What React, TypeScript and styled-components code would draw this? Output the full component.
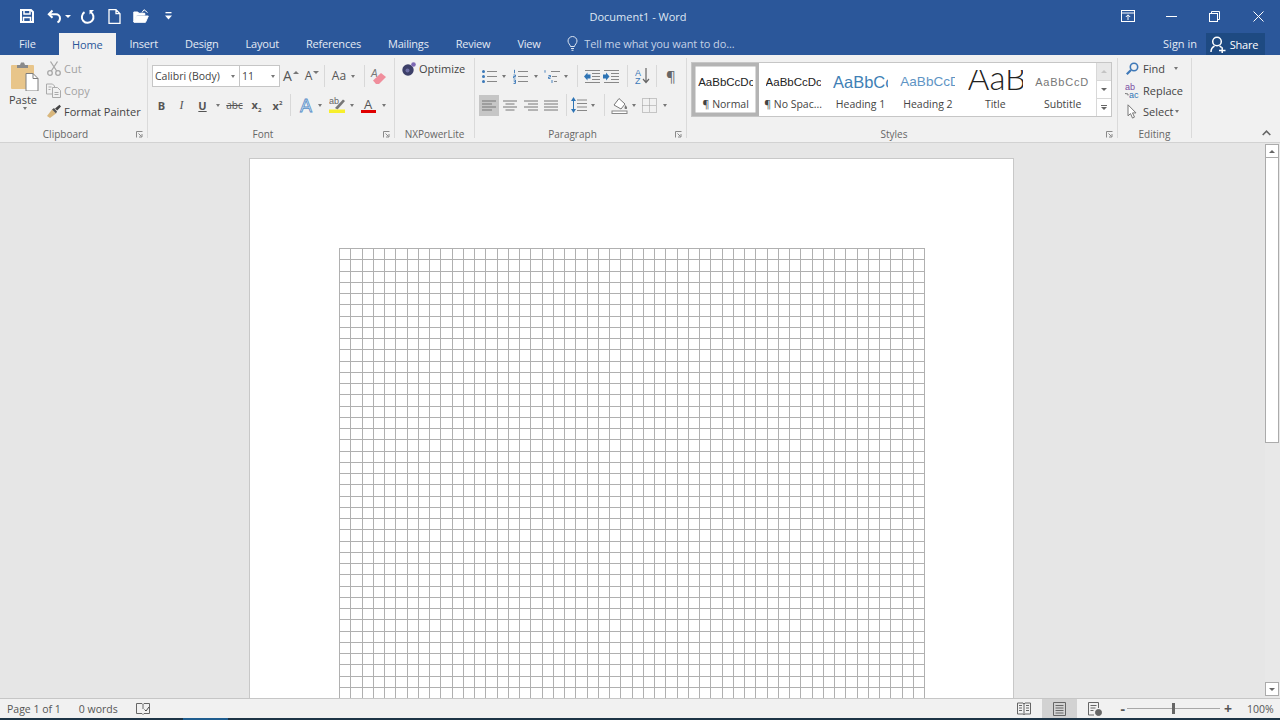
import React from 'react';
import styled, { createGlobalStyle } from 'styled-components';

const GlobalStyle = createGlobalStyle`
  html, body { margin: 0; padding: 0; background: #e6e6e6; }
  body { font-family: "Open Sans", "Noto Sans", sans-serif; overflow: hidden; }
  * { box-sizing: border-box; }
`;

/* ---------- icons ---------- */

const Svg = styled.svg`
  display: block;
  flex: none;
`;

const SaveIcon = () => (
  <Svg width="16" height="16" viewBox="0 0 16 16" fill="none" stroke="#fff" strokeWidth="2">
    <path d="M2 2h10l2 2v10H2z" />
    <path d="M5 2v4h6V2M4.5 14V9.5h7V14" strokeWidth="1.5" />
  </Svg>
);
const UndoIcon = () => (
  <Svg width="15" height="15" viewBox="0 0 15 15" fill="none" stroke="#fff" strokeWidth="2">
    <path d="M5.5 1.5 1.8 5.2l3.7 3.6" />
    <path d="M2 5.2h7a4 4 0 0 1 4 4c0 2-1 3.400-2.500 4.300" />
  </Svg>
);
const RepeatIcon = () => (
  <Svg width="15" height="15" viewBox="0 0 15 15" fill="none" stroke="#fff" strokeWidth="2">
    <path d="M4.500 3.200a5.800 5.800 0 1 0 6-.2" />
    <path d="M14 1H9.500v4.500z" fill="#fff" stroke="none" />
  </Svg>
);
const NewDocIcon = () => (
  <Svg width="13" height="15" viewBox="0 0 13 15" fill="none" stroke="#fff" strokeWidth="1.300">
    <path d="M1 .7h7l4 4v9.600H1zM8 .7v4h4" />
  </Svg>
);
const OpenIcon = () => (
  <Svg width="16" height="14" viewBox="0 0 16 14" fill="#fff" stroke="#fff" strokeWidth="1">
    <path d="M.8 13V3h4l1 1.300h6V6H4L.8 13z" />
    <path d="M1 13.300 4.200 7H15.300L12.500 13.300z" />
    <path d="M9 3.500 11 .7l3.500 2.800" fill="none" />
  </Svg>
);
const CustomizeIcon = () => (
  <Svg width="7" height="8" viewBox="0 0 7 8" fill="#fff">
    <rect x="0.500" y="0" width="6" height="1.300" />
    <path d="M0 3.500h7L3.500 7.500z" />
  </Svg>
);
const DisplayIcon = () => (
  <Svg width="14" height="12" viewBox="0 0 14 12" fill="none" stroke="#fff" strokeWidth="1">
    <rect x=".5" y=".5" width="13" height="11" />
    <path d="M.5 3h13M7 10V5M4.800 7 7 4.800 9.200 7" />
  </Svg>
);
const MinimizeIcon = () => (
  <Svg width="11" height="3" viewBox="0 0 11 3" stroke="#fff" strokeWidth="1">
    <path d="M0 1.500h11" />
  </Svg>
);
const RestoreIcon = () => (
  <Svg width="11" height="11" viewBox="0 0 11 11" fill="none" stroke="#fff" strokeWidth="1">
    <rect x=".5" y="2.500" width="8" height="8" />
    <path d="M2.500 2.500v-2h8v8h-2" />
  </Svg>
);
const CloseIcon = () => (
  <Svg width="11" height="11" viewBox="0 0 11 11" stroke="#fff" strokeWidth="1">
    <path d="M.5.5l10 10M10.500.5l-10 10" />
  </Svg>
);
const BulbIcon = () => (
  <Svg width="11" height="15" viewBox="0 0 11 15" fill="none" stroke="#dbe4f1" strokeWidth="1">
    <path d="M3.500 10.500C3.300 8.500 1 7.500 1 5a4.500 4.500 0 0 1 9 0c0 2.500-2.300 3.500-2.500 5.500zM4 12.500h3M4.500 14.300h2" />
  </Svg>
);
const PersonIcon = () => (
  <Svg width="16" height="17" viewBox="0 0 16 17" fill="none" stroke="#fff" strokeWidth="1.500">
    <circle cx="7" cy="5.500" r="4.300" />
    <path d="M1 16c0-3 1.500-5 3.500-6M9.500 10c.8.300 1.500.9 2 1.500M9 14.500h6.500M12.200 11.200v6" />
  </Svg>
);
const PasteIcon = () => (
  <Svg width="29" height="29" viewBox="0 0 29 29">
    <rect x="1" y="3" width="23" height="24" rx="1" fill="#e8c58a" />
    <path d="M7 3h3l1-2.500h3L15 3h3v3H7z" fill="#8a8a8a" />
    <path d="M16 11.500h7l5 5V29H16z" fill="#fff" stroke="#7e7e7e" />
    <path d="M23 11.500v5h5" fill="none" stroke="#7e7e7e" />
  </Svg>
);
const ScissorsIcon = () => (
  <Svg width="14" height="15" viewBox="0 0 14 15" fill="none" stroke="#a8a8a8" strokeWidth="1.300">
    <circle cx="3" cy="12" r="2.300" />
    <circle cx="11" cy="12" r="2.300" />
    <path d="M4.300 10 10.500.5M9.700 10 3.500.5" />
  </Svg>
);
const CopyIcon = () => (
  <Svg width="15" height="15" viewBox="0 0 15 15" fill="#f1f1f1" stroke="#ababab" strokeWidth="1">
    <path d="M.5 1h6l2 2v8H.5z" />
    <path d="M6.500 4.500h5l3 3v7h-8z" />
    <path d="M2.500 4h3M2.500 6.500h2M8.500 9.500h4M8.500 11.500h4" />
  </Svg>
);
const PainterIcon = () => (
  <Svg width="16" height="15" viewBox="0 0 16 15">
    <path d="M1 12 6 5.500 10 9.500 4 14z" fill="#d9b77c" />
    <path d="M6 5.500 8 4l3 3.500-1 2z" fill="#555" />
    <path d="M9 4.500 13.500.8l1.500 1.700-3.800 4z" fill="#444" />
  </Svg>
);
const EraserIcon = () => (
  <Svg width="18" height="17" viewBox="0 0 18 17">
    <text x="1" y="9" fontFamily="Liberation Sans, sans-serif" fontStyle="italic" fontSize="10" fill="#777">A</text>
    <path d="M3 12.500 11 5l5 4-7 7H6z" fill="#f08e9c" />
  </Svg>
);
const TextEffectIcon = () => (
  <Svg width="20" height="20" viewBox="0 0 20 20">
    <text x="10" y="16.500" textAnchor="middle" fontFamily="Liberation Sans, sans-serif" fontSize="18" fill="#e3eef9" stroke="#5a8fc8" strokeWidth=".8">A</text>
  </Svg>
);
const HighlightIcon = () => (
  <Svg width="17" height="16" viewBox="0 0 17 16">
    <text x="0" y="7" fontFamily="Liberation Sans, sans-serif" fontSize="9" fill="#666">ab</text>
    <path d="M6 11 14 2.500l2 1.500-7.500 8.500z" fill="#777" />
    <rect x="0" y="12.500" width="16" height="3.500" fill="#f7ef2c" />
  </Svg>
);
const OptimizeIcon = () => (
  <Svg width="14" height="14" viewBox="0 0 14 14">
    <circle cx="6" cy="8" r="5.700" fill="#3c3f68" />
    <circle cx="5.500" cy="8.500" r="2" fill="#6e6fa5" />
    <circle cx="11.500" cy="2.500" r="2.300" fill="#7d68b4" />
  </Svg>
);
const BulletsIcon = () => (
  <Svg width="15" height="15" viewBox="0 0 15 15" stroke="#888">
    <path d="M5 2.500h10M5 7.500h10M5 12.500h10" />
    <circle cx="1.500" cy="2.500" r="1.500" fill="#3b78b8" stroke="none" />
    <circle cx="1.500" cy="7.500" r="1.500" fill="#3b78b8" stroke="none" />
    <circle cx="1.500" cy="12.500" r="1.500" fill="#3b78b8" stroke="none" />
  </Svg>
);
const NumberingIcon = () => (
  <Svg width="15" height="15" viewBox="0 0 15 15" stroke="#888">
    <path d="M5 2.500h10M5 7.500h10M5 12.500h10" />
    <path d="M1.500.8v3.500M.5 6h2v1.500H.5V9h2M.5 11h2v3.500h-2M.8 12.700h1.500" stroke="#3b78b8" strokeWidth=".9" fill="none" />
  </Svg>
);
const MultilevelIcon = () => (
  <Svg width="16" height="15" viewBox="0 0 16 15" stroke="#888">
    <path d="M7 2.500h9M8 7.500h5M10 12.500h3" />
    <path d="M1 1.200v2.500M4.500 6.500h2v1.500h-2V9.500h2M8 11v3" stroke="#3b78b8" strokeWidth=".9" fill="none" />
  </Svg>
);
const IndentIcon = ({ $flip }: { $flip?: boolean }) => (
  <Svg width="16" height="13" viewBox="0 0 16 13" stroke="#888">
    <path d="M1 .5h15M8 3.500h8M8 6.500h8M8 9.500h8M1 12.500h15" />
    {$flip ? (
      <path d="M0 4.500h3v-2l3.500 4-3.500 4v-2H0z" fill="#2e74b5" stroke="none" />
    ) : (
      <path d="M6.500 4.500h-3v-2L0 6.500l3.500 4v-2h3z" fill="#2e74b5" stroke="none" />
    )}
  </Svg>
);
const SortIcon = () => (
  <Svg width="15" height="16" viewBox="0 0 15 16">
    <text x="0" y="7.500" fontFamily="Liberation Sans, sans-serif" fontSize="9" fill="#3b78b8">A</text>
    <text x="0" y="15.500" fontFamily="Liberation Sans, sans-serif" fontSize="9" fill="#3b78b8">Z</text>
    <path d="M11 0v14M8 11l3 3.500 3-3.500" fill="none" stroke="#666" strokeWidth="1.200" />
  </Svg>
);
const AlignIcon = ({ $mode }: { $mode: 'left' | 'center' | 'right' | 'justify' }) => {
  const short = {
    left: 'M1 5h10M1 11h10',
    center: 'M3.500 5h9M3.500 11h9',
    right: 'M5 5h10M5 11h10',
    justify: 'M1 5h14M1 11h14'
  }[$mode];
  return (
    <Svg width="16" height="13" viewBox="0 0 16 13" stroke="#777" fill="none">
      <path d="M1 2h14M1 8h14" />
      <path d={short} />
    </Svg>
  );
};
const LineSpacingIcon = () => (
  <Svg width="16" height="16" viewBox="0 0 16 16" fill="none">
    <path d="M6 3h10M6 6.500h10M6 10h10M6 13.500h10" stroke="#888" />
    <path d="M2.500 2v12" stroke="#2e74b5" />
    <path d="M0 4l2.500-4L5 4zM0 12l2.500 4L5 12z" fill="#2e74b5" />
  </Svg>
);
const ShadingIcon = () => (
  <Svg width="18" height="17" viewBox="0 0 18 17" fill="none">
    <path d="M3 8 8 1.500 14 7l-4 5z" fill="#fff" stroke="#777" />
    <path d="M14.500 8c1 1.500 2 2.500 1.500 3.500s-2.500.5-2.500-.5.500-2 1-3z" fill="#777" />
    <rect x="1" y="14" width="15" height="2.500" fill="#fff" stroke="#888" />
  </Svg>
);
const BordersIcon = () => (
  <Svg width="15" height="15" viewBox="0 0 15 15" fill="none" stroke="#999" strokeDasharray="1 1">
    <path d="M.5.500h14v14H.5zM.5 7.500h14M7.500.500v14" />
  </Svg>
);
const LauncherIcon = () => (
  <Svg width="7" height="7" viewBox="0 0 7 7" fill="none" stroke="#8a8a8a">
    <path d="M.5 6.500v-6h6M2.500 2.500l3 3M6 3v3H3" />
  </Svg>
);
const FindIcon = () => (
  <Svg width="13" height="13" viewBox="0 0 13 13" fill="none" stroke="#3f79b8" strokeWidth="1.600">
    <circle cx="8" cy="5" r="3.700" />
    <path d="M5 8 .8 12.200" strokeWidth="2.200" />
  </Svg>
);
const ReplaceIcon = () => (
  <Svg width="16" height="15" viewBox="0 0 16 15">
    <text x="0" y="6.500" fontFamily="Liberation Sans, sans-serif" fontSize="9" fill="#7a4ea3">ab</text>
    <text x="4" y="14.500" fontFamily="Liberation Sans, sans-serif" fontSize="9" fill="#2e74b5">ac</text>
    <path d="M0 10.500 3 11v1.500" fill="none" stroke="#777" />
  </Svg>
);
const CursorIcon = () => (
  <Svg width="11" height="15" viewBox="0 0 11 15" fill="#fff" stroke="#777">
    <path d="M1 .8v11l2.500-2.200 2 4.500 2-1-2-4.200H9z" />
  </Svg>
);
const ChevronUpIcon = () => (
  <Svg width="9" height="6" viewBox="0 0 9 6" fill="none" stroke="#666" strokeWidth="1.600">
    <path d="M.7 5 4.500 1.200 8.300 5" />
  </Svg>
);
const ProofIcon = () => (
  <Svg width="14" height="14" viewBox="0 0 14 14" fill="none" stroke="#666">
    <path d="M.5 1.500H6l1 1 1-1h5.500v10H8l-1 1-1-1H.5zM7 2.500V7" />
    <path d="M8.500 7.500 10 9l3-4" stroke="#444" />
  </Svg>
);
const ReadIcon = () => (
  <Svg width="14" height="13" viewBox="0 0 14 13" fill="none" stroke="#666">
    <path d="M.5 1h5.500L7 2l1-1h5.500v11H8l-1 .7L6 12H.5zM7 2v10M2 3.500h3M2 6h3M2 8.500h3M9 3.500h3M9 6h3M9 8.500h3" />
  </Svg>
);
const PrintIcon = () => (
  <Svg width="13" height="14" viewBox="0 0 13 14" fill="none" stroke="#666">
    <path d="M.5.500h12v13H.5zM2.500 3.500h8M2.500 6h8M2.500 8.500h8M2.500 11h8" />
  </Svg>
);
const WebIcon = () => (
  <Svg width="14" height="14" viewBox="0 0 14 14" fill="none" stroke="#666">
    <path d="M6 13H.5V.5h10V6M2.500 3.500h6M2.500 6h5M2.500 8.500h3" />
    <circle cx="10.500" cy="10.500" r="3" fill="#666" />
  </Svg>
);

/* ---------- title bar ---------- */

const Screen = styled.div`
  width: 1280px;
  height: 720px;
  display: flex;
  flex-direction: column;
  overflow: hidden;
  color: #444;
  font-size: 11px;
`;

const TitleBar = styled.header`
  height: 32px;
  flex: none;
  display: flex;
  align-items: center;
  background: #2b579a;
`;

const QuickAccess = styled.div`
  display: flex;
  align-items: center;
  padding-left: 14px;
`;

const QuickButton = styled.div<{ $w: number }>`
  width: ${(p) => p.$w}px;
  height: 28px;
  display: flex;
  align-items: center;
  justify-content: center;
`;

const QuickCaret = styled.span`
  width: 0;
  height: 0;
  margin-left: -3px;
  border-left: 3px solid transparent;
  border-right: 3px solid transparent;
  border-top: 3px solid #fff;
`;

const WindowTitle = styled.div`
  flex: 1;
  padding-right: 9px;
  text-align: center;
  font-size: 11px;
  color: #dfe7f3;
`;

const WindowButton = styled.div`
  width: 43.500px;
  height: 28px;
  display: flex;
  align-items: center;
  justify-content: center;
`;

const WindowControls = styled.div`
  display: flex;
`;

/* ---------- tabs ---------- */

const TabRow = styled.nav`
  height: 23px;
  flex: none;
  display: flex;
  align-items: stretch;
  padding-left: 5.500px;
  background: #2b579a;
  font-size: 11px;
  letter-spacing: -0.2px;
  color: #e4eaf4;
`;

const Tab = styled.div<{ $active?: boolean; $file?: boolean }>`
  display: flex;
  align-items: center;
  padding: 0 13.500px;
  margin-top: ${(p) => (p.$active ? 1 : 0)}px;
  margin-right: ${(p) => (p.$file ? 9.500 : 0)}px;
  background: ${(p) => (p.$active ? '#f1f1f1' : 'transparent')};
  color: ${(p) => (p.$active ? '#2b579a' : 'inherit')};
`;

const TellMe = styled.div`
  display: flex;
  align-items: center;
  gap: 6px;
  margin-left: 13px;
  letter-spacing: -0.1px;
  color: #c4d2e6;
`;

const Spacer = styled.div`
  flex: 1;
`;

const SignIn = styled.div`
  display: flex;
  align-items: center;
  margin-right: 9px;
  letter-spacing: 0;
`;

const ShareButton = styled.div`
  width: 59px;
  margin: 1px 15px 0 0;
  padding-right: 3px;
  display: flex;
  align-items: center;
  justify-content: center;
  gap: 4px;
  background: #1e4a82;
  color: #fff;
`;

/* ---------- ribbon ---------- */

const Ribbon = styled.section`
  height: 88px;
  flex: none;
  display: flex;
  padding-top: 3px;
  background: #f1f1f1;
  border-bottom: 1px solid #d2d2d2;
`;

const Group = styled.div<{ $w: number }>`
  width: ${(p) => p.$w}px;
  height: 80px;
  flex: none;
  display: flex;
  flex-direction: column;
  border-right: 1px solid #dadada;
`;

const GroupBody = styled.div<{ $pad?: number }>`
  flex: 1;
  min-height: 0;
  display: flex;
  padding-left: ${(p) => p.$pad ?? 0}px;
`;

const GroupLabel = styled.div<{ $launcher?: boolean }>`
  position: relative;
  height: 12px;
  line-height: 12px;
  margin-bottom: -2px;
  padding-right: ${(p) => (p.$launcher ? 16 : 0)}px;
  text-align: center;
  font-size: 10px;
  color: #666;
`;

const Launcher = styled.span`
  position: absolute;
  right: 4px;
  top: 3px;
`;

const PasteButton = styled.div`
  width: 46px;
  display: flex;
  flex-direction: column;
  align-items: center;
  padding-top: 4px;
  padding-left: 3px;
  font-size: 11px;
  color: #444;
`;

const PasteLabel = styled.span`
  margin: 1px 3px 0 0;
  line-height: 15px;
`;

const ActionList = styled.div`
  display: flex;
  flex-direction: column;
`;

const Action = styled.div<{ $disabled?: boolean }>`
  height: 21.500px;
  display: flex;
  align-items: center;
  font-size: 11px;
  white-space: nowrap;
  color: ${(p) => (p.$disabled ? '#a3a3a3' : '#444')};
`;

const ActionIcon = styled.span<{ $w?: number }>`
  width: ${(p) => p.$w ?? 18}px;
  display: flex;
  justify-content: center;
  padding-right: 3px;
`;

const ToolColumn = styled.div`
  display: flex;
  flex-direction: column;
  gap: 7px;
  padding-top: 7px;
`;

const ToolRow = styled.div`
  height: 22px;
  display: flex;
  align-items: center;
`;

const Combo = styled.div<{ $w: number }>`
  width: ${(p) => p.$w}px;
  height: 22px;
  margin-right: -1px;
  padding-left: 2px;
  display: flex;
  align-items: center;
  justify-content: space-between;
  background: #fff;
  border: 1px solid #c6c6c6;
  font-size: 10.500px;
  white-space: nowrap;
`;

const Tool = styled.div<{ $w: number; $on?: boolean }>`
  width: ${(p) => p.$w}px;
  height: 21px;
  flex: none;
  display: flex;
  align-items: center;
  justify-content: center;
  background: ${(p) => (p.$on ? '#c6c6c6' : 'transparent')};
`;

const Glyph = styled.span<{
  $size?: number;
  $bold?: boolean;
  $italic?: boolean;
  $under?: boolean;
  $strike?: boolean;
  $serif?: boolean;
  $color?: string;
}>`
  font-family: ${(p) => (p.$serif ? '"Liberation Serif", serif' : '"Open Sans", sans-serif')};
  font-size: ${(p) => p.$size ?? 11}px;
  font-weight: ${(p) => (p.$bold ? 700 : 400)};
  font-style: ${(p) => (p.$italic ? 'italic' : 'normal')};
  text-decoration: ${(p) => (p.$under ? 'underline' : p.$strike ? 'line-through' : 'none')};
  color: ${(p) => p.$color ?? '#555'};
  line-height: 1;
`;

const SmallSup = styled.sup`
  font-size: 6px;
  line-height: 0;
`;

const SmallSub = styled.sub`
  font-size: 6px;
  line-height: 0;
`;

const GrowTip = styled.span<{ $down?: boolean }>`
  width: 0;
  height: 0;
  margin: -8px 0 0 1px;
  border-left: 3px solid transparent;
  border-right: 3px solid transparent;
  ${(p) => (p.$down ? 'border-top: 3px solid #777;' : 'border-bottom: 3px solid #777;')}
`;

const ColorLetter = styled.span`
  display: block;
  width: 15px;
  text-align: center;
  font-size: 13px;
  line-height: 12px;
  color: #555;
  border-bottom: 3px solid #e00000;
`;

const Drop = styled.div<{ $w?: number }>`
  width: ${(p) => p.$w ?? 10}px;
  flex: none;
  display: flex;
  justify-content: center;
  &::after {
    content: '';
    width: 0;
    height: 0;
    border-left: 2.500px solid transparent;
    border-right: 2.500px solid transparent;
    border-top: 3px solid #777;
  }
`;

const Sep = styled.span<{ $l: number; $r: number }>`
  width: 1px;
  height: 22px;
  flex: none;
  margin: 0 ${(p) => p.$r}px 0 ${(p) => p.$l}px;
  background: #d8d8d8;
`;

/* ---------- styles gallery ---------- */

const Gallery = styled.div`
  width: 421px;
  height: 55px;
  margin: 4px 0 0 4px;
  display: flex;
  background: #fff;
  border: 1px solid #c6c6c6;
`;

const GalleryItems = styled.div`
  width: 404px;
  display: flex;
`;

const StyleItem = styled.div<{ $selected?: boolean }>`
  width: 67.400px;
  flex: none;
  display: flex;
  flex-direction: column;
  align-items: center;
  padding-top: 7px;
  box-shadow: ${(p) => (p.$selected ? 'inset 0 0 0 3.500px #b4b4b4' : 'none')};
`;

const StylePreview = styled.div<{ $size: number; $color: string; $spacing?: number; $light?: boolean }>`
  width: 55px;
  height: 24px;
  overflow: hidden;
  white-space: nowrap;
  line-height: ${(p) => (p.$size > 20 ? 14 : 24)}px;
  text-align: left;
  font-family: ${(p) => (p.$size > 20 ? 'Lato, sans-serif' : '"Liberation Sans", sans-serif')};
  font-size: ${(p) => p.$size}px;
  font-weight: ${(p) => (p.$light ? 300 : 400)};
  letter-spacing: ${(p) => p.$spacing ?? 0}px;
  color: ${(p) => p.$color};
`;

const StyleName = styled.div`
  margin-top: 3px;
  line-height: 15px;
  font-size: 10.500px;
  white-space: nowrap;
`;

const GalleryScroll = styled.div`
  flex: 1;
  display: flex;
  flex-direction: column;
  border-left: 1px solid #d8d8d8;
`;

const ScrollCell = styled.div<{ $disabled?: boolean }>`
  flex: 1;
  display: flex;
  flex-direction: column;
  align-items: center;
  justify-content: center;
  gap: 1px;
  background: ${(p) => (p.$disabled ? '#e8e8e8' : '#fff')};
  border-bottom: 1px solid #d8d8d8;
  &:last-child {
    border-bottom: 0;
  }
`;

const ScrollBar = styled.span`
  width: 6px;
  height: 1px;
  background: #666;
`;

const ScrollTri = styled.span<{ $up?: boolean; $color?: string }>`
  width: 0;
  height: 0;
  border-left: 3px solid transparent;
  border-right: 3px solid transparent;
  ${(p) =>
    p.$up ? `border-bottom: 3px solid ${p.$color ?? '#666'};` : `border-top: 3px solid ${p.$color ?? '#666'};`}
`;

const CollapseSlot = styled.div`
  flex: 1;
  display: flex;
  align-items: flex-end;
  justify-content: flex-end;
  padding: 0 9px 2px 0;
  height: 80px;
`;

/* ---------- workspace ---------- */

const Workspace = styled.main`
  flex: 1;
  min-height: 0;
  display: flex;
  background: #e6e6e6;
`;

const PageArea = styled.div`
  flex: 1;
  padding: 15px 0 0 249px;
  overflow: hidden;
`;

const Page = styled.div`
  width: 765px;
  height: 700px;
  padding: 89px 0 0 89px;
  background: #fff;
  border: 1px solid #c8c8c8;
`;

const GridTable = styled.div`
  width: 586px;
  display: grid;
  grid-template-columns: repeat(52, 11.250px);
  grid-auto-rows: 11.250px;
  border-top: 1px solid #b0b0b0;
  border-left: 1px solid #b0b0b0;
`;

const GridCell = styled.div`
  border-right: 1px solid #b0b0b0;
  border-bottom: 1px solid #b0b0b0;
`;

const ScrollTrack = styled.aside`
  width: 15px;
  padding: 1px 1px 2px 0;
  display: flex;
  flex-direction: column;
  background: #e8e8e8;
`;

const ScrollButton = styled.div`
  height: 14px;
  flex: none;
  display: flex;
  align-items: center;
  justify-content: center;
  background: #fff;
  border: 1px solid #ababab;
`;

const ScrollThumb = styled.div`
  height: 286px;
  flex: none;
  margin-top: -1px;
  background: #fff;
  border: 1px solid #ababab;
`;

const ScrollRest = styled.div`
  flex: 1;
`;

/* ---------- status bar ---------- */

const StatusBar = styled.footer`
  height: 20px;
  flex: none;
  display: flex;
  align-items: center;
  padding-left: 7px;
  background: #f1f1f1;
  border-top: 1px solid #c6c6c6;
  font-size: 10.500px;
  color: #555;
`;

const StatusText = styled.span`
  margin-right: 18px;
  white-space: nowrap;
`;

const ViewButton = styled.div<{ $on?: boolean; $w: number }>`
  width: ${(p) => p.$w}px;
  height: 19px;
  display: flex;
  align-items: center;
  justify-content: center;
  background: ${(p) => (p.$on ? '#d2d2d2' : 'transparent')};
`;

const ZoomGlyph = styled.span<{ $minus?: boolean }>`
  width: 12px;
  text-align: ${(p) => (p.$minus ? 'right' : 'center')};
  font-size: 14px;
  font-weight: 700;
  line-height: 1;
  color: #555;
`;

const ZoomSlider = styled.div`
  position: relative;
  width: 93px;
  height: 1px;
  margin: 0 2px;
  background: #a8a8a8;
`;

const ZoomThumb = styled.span`
  position: absolute;
  left: 45px;
  top: -5px;
  width: 3px;
  height: 11px;
  background: #666;
`;

const ZoomValue = styled.span`
  margin-left: 13px;
  width: 33px;
`;

const TaskStrip = styled.div`
  height: 2px;
  flex: none;
  padding-left: 183px;
  background: #1d3446;
`;

const TaskStripActive = styled.div`
  width: 45px;
  height: 2px;
  background: #1f5d8f;
`;

/* ---------- data ---------- */

const tabs = ['Insert', 'Design', 'Layout', 'References', 'Mailings', 'Review', 'View'];

const styleItems = [
  { name: '¶ Normal', preview: 'AaBbCcDc', size: 11.500, color: '#222', selected: true },
  { name: '¶ No Spac...', preview: 'AaBbCcDc', size: 11.500, color: '#222' },
  { name: 'Heading 1', preview: 'AaBbCc', size: 16.500, color: '#3f7fb5' },
  { name: 'Heading 2', preview: 'AaBbCcD', size: 13.500, color: '#5e94c4' },
  { name: 'Title', preview: 'AaB', size: 33, color: '#222', light: true },
  { name: 'Subtitle', preview: 'AaBbCcD', size: 11, color: '#777', spacing: 0.800 }
];

const cells = Array.from({ length: 52 * 41 });

export default function App() {
  return (
    <Screen>
      <GlobalStyle />
      <TitleBar>
        <QuickAccess>
          <QuickButton $w={26}><SaveIcon /></QuickButton>
          <QuickButton $w={28}><UndoIcon /></QuickButton>
          <QuickCaret />
          <QuickButton $w={32}><RepeatIcon /></QuickButton>
          <QuickButton $w={22}><NewDocIcon /></QuickButton>
          <QuickButton $w={32}><OpenIcon /></QuickButton>
          <QuickButton $w={22}><CustomizeIcon /></QuickButton>
        </QuickAccess>
        <WindowTitle>Document1 - Word</WindowTitle>
        <WindowControls>
          <WindowButton><DisplayIcon /></WindowButton>
          <WindowButton><MinimizeIcon /></WindowButton>
          <WindowButton><RestoreIcon /></WindowButton>
          <WindowButton><CloseIcon /></WindowButton>
        </WindowControls>
      </TitleBar>

      <TabRow>
        <Tab $file>File</Tab>
        <Tab $active>Home</Tab>
        {tabs.map((t) => (
          <Tab key={t}>{t}</Tab>
        ))}
        <TellMe>
          <BulbIcon />
          Tell me what you want to do...
        </TellMe>
        <Spacer />
        <SignIn>Sign in</SignIn>
        <ShareButton>
          <PersonIcon />
          Share
        </ShareButton>
      </TabRow>

      <Ribbon>
        <Group $w={148}>
          <GroupBody>
            <PasteButton>
              <PasteIcon />
              <PasteLabel>Paste</PasteLabel>
              <Drop $w={6} />
            </PasteButton>
            <ActionList>
              <Action $disabled><ActionIcon><ScissorsIcon /></ActionIcon>Cut</Action>
              <Action $disabled><ActionIcon><CopyIcon /></ActionIcon>Copy</Action>
              <Action><ActionIcon><PainterIcon /></ActionIcon>Format Painter</Action>
            </ActionList>
          </GroupBody>
          <GroupLabel $launcher>Clipboard<Launcher><LauncherIcon /></Launcher></GroupLabel>
        </Group>

        <Group $w={247}>
          <GroupBody $pad={4}>
            <ToolColumn>
              <ToolRow>
                <Combo $w={88}>Calibri (Body)<Drop $w={12} /></Combo>
                <Combo $w={41}>11<Drop $w={12} /></Combo>
                <Tool $w={24}><Glyph $size={14}>A</Glyph><GrowTip /></Tool>
                <Tool $w={18}><Glyph $size={12}>A</Glyph><GrowTip $down /></Tool>
                <Sep $l={3} $r={5} />
                <Tool $w={18}><Glyph $size={12}>Aa</Glyph></Tool>
                <Drop $w={10} />
                <Sep $l={6} $r={5} />
                <Tool $w={18}><EraserIcon /></Tool>
              </ToolRow>
              <ToolRow>
                <Tool $w={19}><Glyph $bold>B</Glyph></Tool>
                <Tool $w={21}><Glyph $italic $serif $size={12}>I</Glyph></Tool>
                <Tool $w={21}><Glyph $bold $under>U</Glyph></Tool>
                <Drop $w={10} />
                <Tool $w={23}><Glyph $strike $size={10}>abc</Glyph></Tool>
                <Tool $w={21}><Glyph $bold>x<SmallSub>2</SmallSub></Glyph></Tool>
                <Tool $w={21}><Glyph $bold>x<SmallSup>2</SmallSup></Glyph></Tool>
                <Sep $l={2} $r={7} />
                <Tool $w={16}><TextEffectIcon /></Tool>
                <Drop $w={12} />
                <Tool $w={22}><HighlightIcon /></Tool>
                <Drop $w={8} />
                <Tool $w={24}><ColorLetter>A</ColorLetter></Tool>
                <Drop $w={8} />
              </ToolRow>
            </ToolColumn>
          </GroupBody>
          <GroupLabel $launcher>Font<Launcher><LauncherIcon /></Launcher></GroupLabel>
        </Group>

        <Group $w={80}>
          <GroupBody $pad={7}>
            <ActionList>
              <Action><ActionIcon $w={17}><OptimizeIcon /></ActionIcon>Optimize</Action>
            </ActionList>
          </GroupBody>
          <GroupLabel>NXPowerLite</GroupLabel>
        </Group>

        <Group $w={212}>
          <GroupBody $pad={4}>
            <ToolColumn>
              <ToolRow>
                <Tool $w={20}><BulletsIcon /></Tool>
                <Drop />
                <Tool $w={22}><NumberingIcon /></Tool>
                <Drop />
                <Tool $w={21}><MultilevelIcon /></Tool>
                <Drop $w={8} />
                <Sep $l={7} $r={5} />
                <Tool $w={18}><IndentIcon /></Tool>
                <Tool $w={20}><IndentIcon $flip /></Tool>
                <Sep $l={6} $r={5} />
                <Tool $w={18}><SortIcon /></Tool>
                <Sep $l={5} $r={5} />
                <Tool $w={18}><Glyph $size={15} $color="#666">¶</Glyph></Tool>
              </ToolRow>
              <ToolRow>
                <Tool $w={20} $on><AlignIcon $mode="left" /></Tool>
                <Tool $w={21}><AlignIcon $mode="center" /></Tool>
                <Tool $w={21}><AlignIcon $mode="right" /></Tool>
                <Tool $w={20}><AlignIcon $mode="justify" /></Tool>
                <Sep $l={5} $r={3} />
                <Tool $w={18}><LineSpacingIcon /></Tool>
                <Drop />
                <Sep $l={6} $r={6} />
                <Tool $w={18}><ShadingIcon /></Tool>
                <Drop />
                <Tool $w={21}><BordersIcon /></Tool>
                <Drop />
              </ToolRow>
            </ToolColumn>
          </GroupBody>
          <GroupLabel $launcher>Paragraph<Launcher><LauncherIcon /></Launcher></GroupLabel>
        </Group>

        <Group $w={431}>
          <GroupBody>
            <Gallery>
              <GalleryItems>
                {styleItems.map((s) => (
                  <StyleItem key={s.name} $selected={s.selected}>
                    <StylePreview $size={s.size} $color={s.color} $spacing={s.spacing} $light={s.light}>
                      {s.preview}
                    </StylePreview>
                    <StyleName>{s.name}</StyleName>
                  </StyleItem>
                ))}
              </GalleryItems>
              <GalleryScroll>
                <ScrollCell $disabled><ScrollTri $up $color="#c4c4c4" /></ScrollCell>
                <ScrollCell><ScrollTri /></ScrollCell>
                <ScrollCell><ScrollBar /><ScrollTri /></ScrollCell>
              </GalleryScroll>
            </Gallery>
          </GroupBody>
          <GroupLabel $launcher>Styles<Launcher><LauncherIcon /></Launcher></GroupLabel>
        </Group>

        <Group $w={74}>
          <GroupBody $pad={7}>
            <ActionList>
              <Action><ActionIcon><FindIcon /></ActionIcon>Find<Drop $w={22} /></Action>
              <Action><ActionIcon><ReplaceIcon /></ActionIcon>Replace</Action>
              <Action><ActionIcon><CursorIcon /></ActionIcon>Select<Drop $w={7} /></Action>
            </ActionList>
          </GroupBody>
          <GroupLabel>Editing</GroupLabel>
        </Group>

        <CollapseSlot><ChevronUpIcon /></CollapseSlot>
      </Ribbon>

      <Workspace>
        <PageArea>
          <Page>
            <GridTable>
              {cells.map((_, i) => (
                <GridCell key={i} />
              ))}
            </GridTable>
          </Page>
        </PageArea>
        <ScrollTrack>
          <ScrollButton><ScrollTri $up /></ScrollButton>
          <ScrollThumb />
          <ScrollRest />
          <ScrollButton><ScrollTri /></ScrollButton>
        </ScrollTrack>
      </Workspace>

      <StatusBar>
        <StatusText>Page 1 of 1</StatusText>
        <StatusText>0 words</StatusText>
        <ProofIcon />
        <Spacer />
        <ViewButton $w={36}><ReadIcon /></ViewButton>
        <ViewButton $w={35} $on><PrintIcon /></ViewButton>
        <ViewButton $w={36}><WebIcon /></ViewButton>
        <ZoomGlyph $minus>-</ZoomGlyph>
        <ZoomSlider><ZoomThumb /></ZoomSlider>
        <ZoomGlyph>+</ZoomGlyph>
        <ZoomValue>100%</ZoomValue>
      </StatusBar>
      <TaskStrip><TaskStripActive /></TaskStrip>
    </Screen>
  );
}
